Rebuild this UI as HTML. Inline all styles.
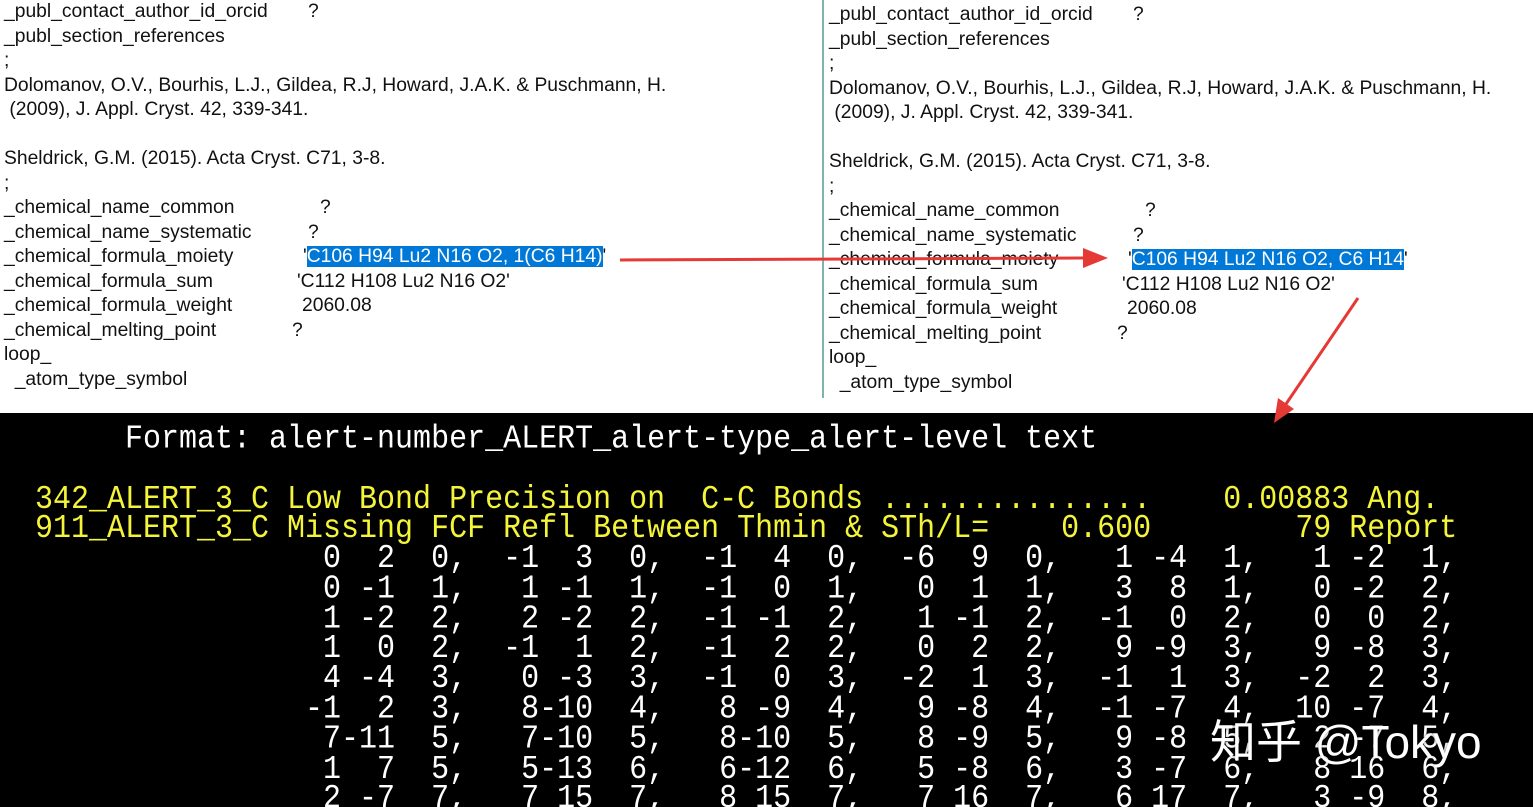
<!DOCTYPE html>
<html><head><meta charset="utf-8"><style>
html,body{margin:0;padding:0;width:1533px;height:807px;overflow:hidden;background:#fff;position:relative}
.pane{position:absolute;font-family:"Liberation Sans",sans-serif;font-size:19.3px;color:#111;line-height:24.5px}
.pane div{position:relative;height:24.5px;white-space:pre}
.v{position:absolute;top:0}
.hl{background:#0078d7;color:#fff}
#L{left:4px;top:0px}
#R{left:829px;top:3px}
#bot{position:absolute;left:0;top:413px;width:1533px;height:394px;background:#000}
pre{position:absolute;left:35px;top:12px;margin:0;font-family:"Liberation Mono",monospace;font-size:30px;line-height:26.786px;color:#fff;transform:scaleY(1.12);transform-origin:0 0}
.y{color:#f4f43a}
#wm{position:absolute;left:1210px;font-family:"Liberation Sans","Noto Sans CJK SC",sans-serif;font-size:46px;color:#fff;text-shadow:0 0 3px rgba(0,0,0,.5)}
</style></head><body>
<div class="pane" id="L"><div>_publ_contact_author_id_orcid<span class="v" style="left:304px">?</span></div><div>_publ_section_references</div><div>;</div><div>Dolomanov, O.V., Bourhis, L.J., Gildea, R.J, Howard, J.A.K. &amp; Puschmann, H.</div><div> (2009), J. Appl. Cryst. 42, 339-341.</div><div> </div><div>Sheldrick, G.M. (2015). Acta Cryst. C71, 3-8.</div><div>;</div><div>_chemical_name_common<span class="v" style="left:316px">?</span></div><div>_chemical_name_systematic<span class="v" style="left:304px">?</span></div><div>_chemical_formula_moiety<span class="v" style="left:299px">'<span class="hl">C106 H94 Lu2 N16 O2, 1(C6 H14)</span>'</span></div><div>_chemical_formula_sum<span class="v" style="left:293px">'C112 H108 Lu2 N16 O2'</span></div><div>_chemical_formula_weight<span class="v" style="left:298px">2060.08</span></div><div>_chemical_melting_point<span class="v" style="left:288px">?</span></div><div>loop_</div><div>  _atom_type_symbol</div></div>
<div style="position:absolute;left:822px;top:0;width:2px;height:398px;background:#7fb3b0"></div>
<div class="pane" id="R"><div>_publ_contact_author_id_orcid<span class="v" style="left:304px">?</span></div><div>_publ_section_references</div><div>;</div><div>Dolomanov, O.V., Bourhis, L.J., Gildea, R.J, Howard, J.A.K. &amp; Puschmann, H.</div><div> (2009), J. Appl. Cryst. 42, 339-341.</div><div> </div><div>Sheldrick, G.M. (2015). Acta Cryst. C71, 3-8.</div><div>;</div><div>_chemical_name_common<span class="v" style="left:316px">?</span></div><div>_chemical_name_systematic<span class="v" style="left:304px">?</span></div><div>_chemical_formula_moiety<span class="v" style="left:299px">'<span class="hl">C106 H94 Lu2 N16 O2, C6 H14</span>'</span></div><div>_chemical_formula_sum<span class="v" style="left:293px">'C112 H108 Lu2 N16 O2'</span></div><div>_chemical_formula_weight<span class="v" style="left:298px">2060.08</span></div><div>_chemical_melting_point<span class="v" style="left:288px">?</span></div><div>loop_</div><div>  _atom_type_symbol</div></div>
<div id="bot"><pre>     Format: alert-number_ALERT_alert-type_alert-level text

<span class="y">342_ALERT_3_C Low Bond Precision on  C-C Bonds ...............    0.00883 Ang.
911_ALERT_3_C Missing FCF Refl Between Thmin &amp; STh/L=    0.600        79 Report</span>
                0  2  0,  -1  3  0,  -1  4  0,  -6  9  0,   1 -4  1,   1 -2  1,
                0 -1  1,   1 -1  1,  -1  0  1,   0  1  1,   3  8  1,   0 -2  2,
                1 -2  2,   2 -2  2,  -1 -1  2,   1 -1  2,  -1  0  2,   0  0  2,
                1  0  2,  -1  1  2,  -1  2  2,   0  2  2,   9 -9  3,   9 -8  3,
                4 -4  3,   0 -3  3,  -1  0  3,  -2  1  3,  -1  1  3,  -2  2  3,
               -1  2  3,   8-10  4,   8 -9  4,   9 -8  4,  -1 -7  4,  10 -7  4,
                7-11  5,   7-10  5,   8-10  5,   8 -9  5,   9 -8  5,   2 -7  5,
                1  7  5,   5-13  6,   6-12  6,   5 -8  6,   3 -7  6,   8 16  6,
                2 -7  7,   7 15  7,   8 15  7,   7 16  7,   6 17  7,   3 -9  8,</pre>
<div id="wm" style="top:293px">知乎 @Tokyo</div>
</div>
<svg style="position:absolute;left:0;top:0" width="1533" height="807">
<line x1="620" y1="260" x2="1085" y2="258" stroke="#e53935" stroke-width="3"/>
<polygon points="1083,248 1108,258 1083,268" fill="#e53935"/>
<line x1="1358" y1="298" x2="1286" y2="404" stroke="#e53935" stroke-width="3"/>
<polygon points="1278,398 1274,423 1294,409" fill="#e53935"/>
</svg>
</body></html>
